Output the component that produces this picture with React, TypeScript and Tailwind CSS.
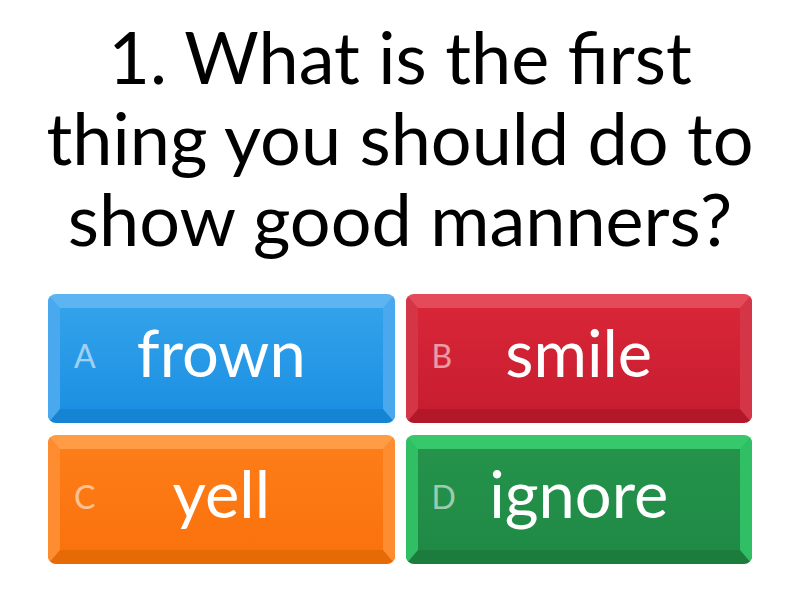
const ANSWERS = [
  { key: 'A', text: 'frown', cls: 'bg-gradient-to-b from-[#32a2ea] to-[#1b90e2] border-t-[#5cb4f1] border-l-[#4aa9ee] border-r-[#4aa9ee] border-b-[#1584d3]' },
  { key: 'B', text: 'smile', cls: 'bg-gradient-to-b from-[#d82638] to-[#c81d30] border-t-[#e44a5a] border-l-[#d53647] border-r-[#d53647] border-b-[#b3182a]' },
  { key: 'C', text: 'yell', cls: 'bg-gradient-to-b from-[#fd7d18] to-[#fa720c] border-t-[#ff9c45] border-l-[#fe8c30] border-r-[#fe8c30] border-b-[#e66a06]' },
  { key: 'D', text: 'ignore', cls: 'bg-gradient-to-b from-[#25934c] to-[#1f8a45] border-t-[#36c86b] border-l-[#30bf64] border-r-[#30bf64] border-b-[#1c7c3e]' },
];

export default function App() {
  return (
    <div className="w-[800px] h-[600px] bg-white flex flex-col items-center" style={{ fontFamily: 'Lato, "Noto Sans", sans-serif' }}>
      <h1 className="mt-[16px] h-[278px] w-full text-center text-black text-[72px] leading-[81px] font-normal">
        1. What is the first<br />thing you should do to<br />show good manners?
      </h1>
      <div className="grid grid-cols-2 gap-x-[11px] gap-y-[12px] px-[48px] w-full">
        {ANSWERS.map(a => (
          <div
            key={a.key}
            className={`relative h-[129px] rounded-[8px] border-t-[14px] border-b-[14px] border-x-[12px] flex items-center justify-center ${a.cls}`}
          >
            <span className="absolute left-[14px] top-[32px] text-[32px] leading-none text-white/55">{a.key}</span>
            <span className="text-white text-[65px] leading-none pb-[12px]">{a.text}</span>
          </div>
        ))}
      </div>
    </div>
  );
}
